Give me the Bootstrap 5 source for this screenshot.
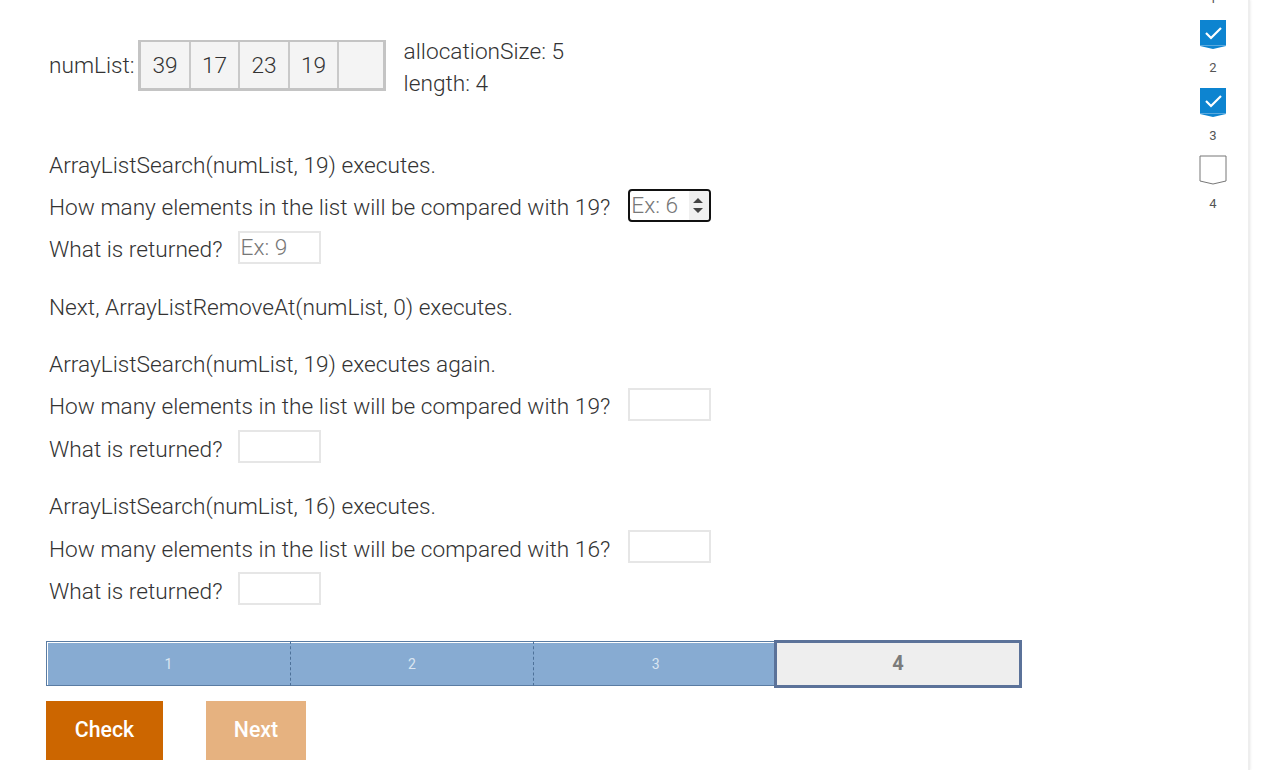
<!DOCTYPE html>
<html lang="en"><head><meta charset="utf-8"><title>ArrayList search</title>
<link rel="stylesheet" href="https://cdn.jsdelivr.net/npm/bootstrap@5.3.0/dist/css/bootstrap.min.css">
<style>
html,body{height:770px;overflow:hidden}
body{font-family:Roboto,"Liberation Sans",sans-serif;font-weight:300;font-size:22.68px;color:#333;background:#fff;line-height:32px}
.page-shell{height:770px;overflow:hidden}
.content-col{width:1250px;height:770px;border-right:2px solid #eee;box-shadow:1px 0 2px rgba(0,0,0,.06);flex:none;overflow:hidden}
.main-area{width:1150px;padding:40px 0 0 46px;flex:none}
.arr-line{padding-left:3px;height:51px}
.arr-box{display:flex;border:3px solid #c4c4c4;border-top-width:2px;height:51px;width:248px;margin-left:3.6px;background:#f4f4f4}
.arr-cell{width:49.5px;display:flex;align-items:center;justify-content:center;border-right:2px solid #c9c9c9;padding-top:1px}
.arr-cell:last-child{border-right:0;flex:1}
.arr-meta{margin-left:17.4px;margin-top:-4px}
.q-block{padding-left:3px}
.q-line{height:42.35px;display:flex;align-items:center}
.gap-one{margin-top:53.6px}
.gap-two{margin-top:15px}
.in-box{display:inline-block;width:83px;height:33px;border:2px solid #e6e6e6;margin-left:18px;margin-bottom:6px;color:#777;padding:0 1px;line-height:30px;position:relative;background:#fff}
.in-box.short{margin-left:15px}
.in-box.focused{border:2px solid #111;border-radius:4px;box-shadow:0 0 0 1px #fff}
.spin{position:absolute;right:0;top:0;bottom:0;width:20px;background:#f0f0f0;border-radius:0 2px 2px 0}
.spin svg{display:block}
.step-bar{display:flex;width:976px;height:48px;margin-top:26.6px}
.step-done{flex:1;background:#87abd2;border:1px solid #5a7ca3;border-left:0;border-right:1px dashed #4d7199;box-shadow:inset 0 1px 0 #fff;color:#dbe6f1;font-size:14px;font-weight:400;display:flex;align-items:center;justify-content:center;height:45px;margin-top:1px;padding-top:1px}
.step-done.first{border-left:1px solid #5a7ca3;box-shadow:inset 1px 1px 0 #fff}
.step-done.third{border-right:0}
.step-now{width:248px;margin-left:-3px;flex:none;background:#eee;border:3px solid #5b7299;color:#7b7b7b;font-size:20px;font-weight:700;display:flex;align-items:center;justify-content:center;height:48px;padding-bottom:2px}
.btn-row{margin-top:13px;gap:43px}
.act-btn{height:59px;border:0;border-radius:0;color:#fff;font-size:21.3px;font-weight:500;font-family:Roboto,sans-serif;display:flex;align-items:center;justify-content:center}
.act-check{width:117px;background:#c60}
.act-next{width:100px;background:#e6b280}
.rail{width:54px;margin-left:36px;flex:none;text-align:center;font-size:13px;font-weight:400;color:#555;line-height:16px;margin-top:-9px}
.rail-num{height:16px;margin-bottom:11px}
.rail-num:first-child{margin-bottom:12px}
.rail-flag{display:block;margin:0 auto 11px;width:28px;height:30px}
</style></head><body>
<div class="page-shell d-flex">
<div class="content-col d-flex">
<div class="main-area">
<div class="arr-line d-flex align-items-start">
<div class="d-flex align-items-center h-100"><span>numList:</span></div>
<div class="arr-box"><div class="arr-cell">39</div><div class="arr-cell">17</div><div class="arr-cell">23</div><div class="arr-cell">19</div><div class="arr-cell"></div></div>
<div class="arr-meta"><div>allocationSize: 5</div><div>length: 4</div></div>
</div>
<div class="q-block gap-one">
<div class="q-line">ArrayListSearch(numList, 19) executes.</div>
<div class="q-line">How many elements in the list will be compared with 19?<span class="in-box focused">Ex: 6<span class="spin"><svg width="20" height="29" viewBox="0 0 20 29"><path d="M4 12 9 7l5 5zM4 17h10l-5 5z" fill="#444"/></svg></span></span></div>
<div class="q-line">What is returned?<span class="in-box short">Ex: 9</span></div>
</div>
<div class="q-block gap-two"><div class="q-line">Next, ArrayListRemoveAt(numList, 0) executes.</div></div>
<div class="q-block gap-two">
<div class="q-line">ArrayListSearch(numList, 19) executes again.</div>
<div class="q-line">How many elements in the list will be compared with 19?<span class="in-box"></span></div>
<div class="q-line">What is returned?<span class="in-box short"></span></div>
</div>
<div class="q-block gap-two">
<div class="q-line">ArrayListSearch(numList, 16) executes.</div>
<div class="q-line">How many elements in the list will be compared with 16?<span class="in-box"></span></div>
<div class="q-line">What is returned?<span class="in-box short"></span></div>
</div>
<div class="step-bar">
<div class="step-done first">1</div><div class="step-done">2</div><div class="step-done third">3</div><div class="step-now">4</div>
</div>
<div class="d-flex btn-row">
<button class="btn act-btn act-check" type="button">Check</button>
<button class="btn act-btn act-next" type="button">Next</button>
</div>
</div>
<div class="rail">
<div class="rail-num">1</div>
<svg class="rail-flag" viewBox="0 0 28 30"><path d="M1 1h26v26l-13 3-13-3z" fill="#0d84d0"/><path d="M1 26.5h26" stroke="#5aa9de"/><path d="M7 14l5 5 10-10" fill="none" stroke="#fff" stroke-width="2.2"/></svg>
<div class="rail-num">2</div>
<svg class="rail-flag" viewBox="0 0 28 30"><path d="M1 1h26v26l-13 3-13-3z" fill="#0d84d0"/><path d="M1 26.5h26" stroke="#5aa9de"/><path d="M7 14l5 5 10-10" fill="none" stroke="#fff" stroke-width="2.2"/></svg>
<div class="rail-num">3</div>
<svg class="rail-flag" viewBox="0 0 28 30"><path d="M1 1h26v25l-13 3-13-3z" fill="#fff" stroke="#777"/></svg>
<div class="rail-num">4</div>
</div>
</div>
</div>
</body></html>
